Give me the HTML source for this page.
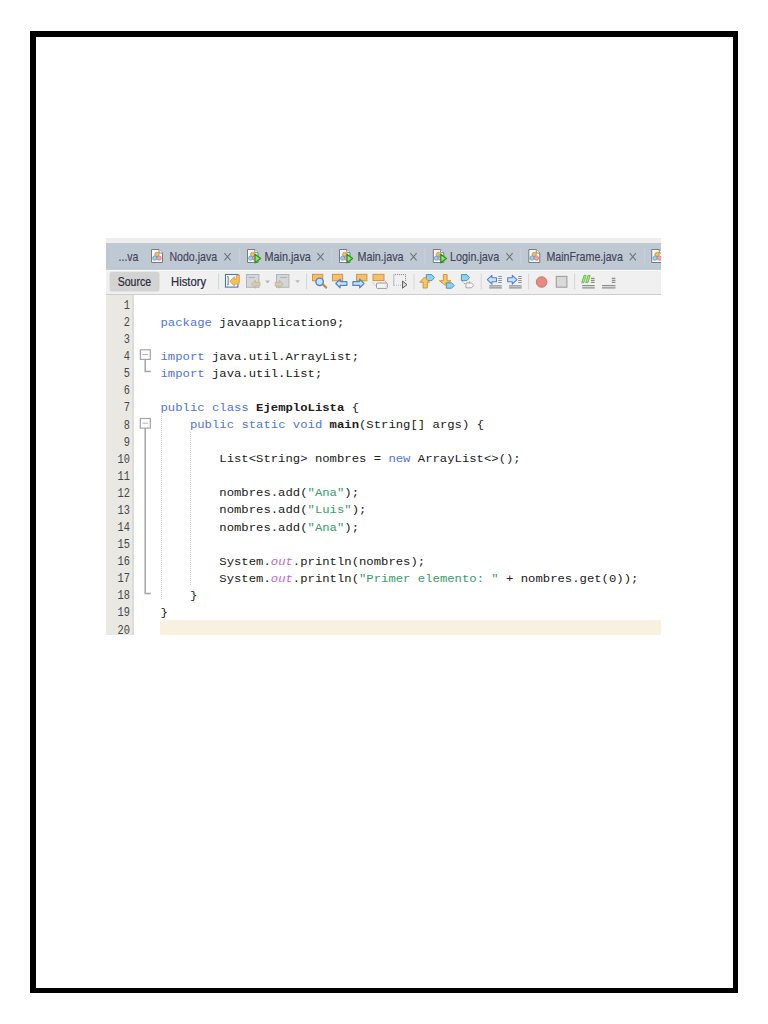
<!DOCTYPE html>
<html><head><meta charset="utf-8">
<style>
html,body{margin:0;padding:0;background:#fff;width:768px;height:1024px;overflow:hidden;position:relative}
.frame{position:absolute;left:30px;top:31px;width:708px;height:962px;box-sizing:border-box;border-style:solid;border-color:#000;border-width:6px 5px 5px 6px}
.shot{position:absolute;left:106px;top:238px;width:555px;height:397px;overflow:hidden;background:#fff}
.strip{position:absolute;left:0;top:0;width:555px;height:5px;background:#efeeed}
.tabs{position:absolute;left:0;top:5px;width:555px;height:27px;background:#bfc9d3}
.tb{position:absolute;left:0;top:32px;width:555px;height:24px;background:#f0f0f0;border-bottom:1px solid #cdcdcd}
.gut{position:absolute;left:0;top:57px;width:26px;height:340px;background:#e9e8e3;border-right:2px solid #dddcd6}
.hl{position:absolute;left:54px;width:501px;height:17.08px;background:#f8f1e0}
.t{position:absolute;font-family:"Liberation Sans",sans-serif;font-size:11px;color:#3a3a4a;white-space:nowrap;line-height:14px}
.code{position:absolute;left:54.5px;font-family:"Liberation Mono",monospace;font-size:12.25px;white-space:pre;line-height:17.08px;color:#202020;transform:scaleY(0.88);transform-origin:0 12px}
.ln{position:absolute;left:0;width:24px;text-align:right;font-family:"Liberation Mono",monospace;font-size:12px;line-height:17.08px;color:#464646;transform:scaleX(0.86);transform-origin:100% 50%}
.k{color:#5274e2}
.s{color:#35a065}
.f{color:#c266cc;font-style:italic}
.b{font-weight:bold}
.ov{position:absolute;left:0;top:0}

</style></head><body>
<div class="frame"></div>
<div class="shot">
<div class="strip"></div>
<div class="tabs"></div>
<div class="tb"></div>
<div class="gut"></div>
<svg class="ov" width="555" height="397" viewBox="106 238 555 397">
<defs>
 <g id="doc">
  <path d="M0.5,0.5 H8 L11.5,4 V13.5 H0.5 Z" fill="#f8f8f8" stroke="#7a7a7a" stroke-width="1"/>
  <path d="M8,0.5 V4 H11.5" fill="#ffffff" stroke="#7a7a7a" stroke-width="0.9"/>
  <circle cx="5.9" cy="5.4" r="2.2" fill="#f0bf5c" stroke="#b98a2a" stroke-width="0.6"/>
  <circle cx="3.8" cy="9.1" r="2.2" fill="#96d0f2" stroke="#4a88b8" stroke-width="0.6"/>
  <circle cx="8.1" cy="9.1" r="2.2" fill="#f6a2a2" stroke="#c46666" stroke-width="0.6"/>
 </g>
 <g id="run">
  <path d="M0.5,0.5 H7.8 L11,3.7 V13.5 H0.5 Z" fill="#f8f8f8" stroke="#7a7a7a" stroke-width="1"/>
  <path d="M7.8,0.5 V3.7 H11" fill="#ffffff" stroke="#7a7a7a" stroke-width="0.9"/>
  <circle cx="5.5" cy="5.4" r="2.1" fill="#f0bf5c" stroke="#b98a2a" stroke-width="0.6"/>
  <circle cx="3.6" cy="9.2" r="2.1" fill="#96d0f2" stroke="#4a88b8" stroke-width="0.6"/>
  <circle cx="7.4" cy="9.2" r="2.1" fill="#f6a2a2" stroke="#c46666" stroke-width="0.6"/>
  <path d="M8,5.2 L13.6,9.6 L8,13.8 Z" fill="#9ade7a" stroke="#1f9a1f" stroke-width="1.3" stroke-linejoin="round"/>
 </g>
 <g id="x"><path d="M0.2,0.2 L6.4,7.4 M6.4,0.2 L0.2,7.4" stroke="#727272" stroke-width="1.05"/></g>
</defs>
<!-- tab bar -->
<rect x="239.2" y="248" width="1.2" height="15.7" fill="#c9cfd5"/><rect x="331.1" y="248" width="1.2" height="15.7" fill="#c9cfd5"/><rect x="424.3" y="248" width="1.2" height="15.7" fill="#c9cfd5"/><rect x="520.1" y="248" width="1.2" height="15.7" fill="#c9cfd5"/><rect x="643.8" y="248" width="1.2" height="15.7" fill="#c9cfd5"/>
<rect x="106" y="268.8" width="555" height="1" fill="#b9c1ca"/>
<g font-family="Liberation Sans" font-size="12.4" fill="#444458" stroke="#444458" stroke-width="0.15">
 <text x="118.5" y="261" textLength="20" lengthAdjust="spacingAndGlyphs">...va</text>
 <use href="#doc" x="151" y="249"/>
 <text x="169.4" y="261" textLength="47.7" lengthAdjust="spacingAndGlyphs">Nodo.java</text>
 <use href="#x" x="224.2" y="253"/>
 <use href="#run" x="247" y="249"/>
 <text x="264.4" y="261" textLength="46.5" lengthAdjust="spacingAndGlyphs">Main.java</text>
 <use href="#x" x="317.2" y="253"/>
 <use href="#run" x="339" y="249"/>
 <text x="357.4" y="261" textLength="46.2" lengthAdjust="spacingAndGlyphs">Main.java</text>
 <use href="#x" x="410.2" y="253"/>
 <use href="#run" x="432.8" y="249"/>
 <text x="450" y="261" textLength="49.3" lengthAdjust="spacingAndGlyphs">Login.java</text>
 <use href="#x" x="506.2" y="253"/>
 <use href="#doc" x="528.3" y="249"/>
 <text x="546.4" y="261" textLength="76.5" lengthAdjust="spacingAndGlyphs">MainFrame.java</text>
 <use href="#x" x="629.5" y="253"/>
 <use href="#doc" x="651.2" y="249"/>
</g>
<!-- toolbar -->
<rect x="106" y="269.8" width="555" height="1.2" fill="#f8f8f8"/>
<rect x="109.6" y="271.8" width="49.9" height="19.6" rx="2.5" fill="#d3d3d3"/>
<g font-family="Liberation Sans" font-size="12" fill="#2a2a3a" stroke="#2a2a3a" stroke-width="0.2">
 <text x="117.7" y="285.5" textLength="33.4" lengthAdjust="spacingAndGlyphs">Source</text>
 <text x="171.1" y="285.5" textLength="35" lengthAdjust="spacingAndGlyphs">History</text>
</g>
<g stroke="#d6d6d6" stroke-width="1">
 <line x1="218.6" y1="273.5" x2="218.6" y2="289.5"/>
 <line x1="306.6" y1="273.5" x2="306.6" y2="289.5"/>
 <line x1="414" y1="273.5" x2="414" y2="289.5"/>
 <line x1="481.2" y1="273.5" x2="481.2" y2="289.5"/>
 <line x1="528.6" y1="273.5" x2="528.6" y2="289.5"/>
 <line x1="574.6" y1="273.5" x2="574.6" y2="289.5"/>
</g>
<!-- last edit -->
<rect x="225.5" y="274.5" width="12.4" height="12.6" fill="#f8fbff" stroke="#4a78a8" stroke-width="1.1"/>
<path d="M227.2,276.6 h1 v8.2 h-1" fill="none" stroke="#555" stroke-width="0.8"/>
<path d="M229.8,281.3 L234.3,276.9 V279.3 H235.9 L236.3,275.6 L239.4,274.8 V282.6 C239.4,283.5 238.6,284.1 237.6,284.1 H234.3 V286 Z" fill="#f7be5e" stroke="#d09a3a" stroke-width="0.8" stroke-linejoin="round"/>
<!-- back disabled -->
<rect x="246.5" y="274.5" width="12.4" height="12.8" fill="#d3d7db" stroke="#b0b4b8" stroke-width="1"/>
<path d="M248.5,277.5 h6.5" stroke="#a8acb0" stroke-width="0.9"/>
<path d="M251.3,284.2 L255.3,280.2 V282.4 H260 V286 H255.3 V288.3 Z" fill="#d8c9a8" stroke="#c2b08c" stroke-width="0.7" stroke-linejoin="round"/>
<path d="M265.2,280.5 h4.8 l-2.4,3 z" fill="#b4b4b4"/>
<!-- forward disabled -->
<rect x="276.5" y="274.5" width="12.4" height="12.8" fill="#d3d7db" stroke="#b0b4b8" stroke-width="1"/>
<path d="M280.2,277.5 h7" stroke="#a8acb0" stroke-width="0.9"/>
<path d="M283.3,284.2 L279.3,280.2 V282.3 H275.1 V286.1 H279.3 V288.2 Z" fill="#d8c9a8" stroke="#c2b08c" stroke-width="0.7" stroke-linejoin="round"/>
<path d="M295.3,280.2 h4.6 l-2.3,2.8 z" fill="#b4b4b4"/>
<!-- find -->
<rect x="312.5" y="274.3" width="10.3" height="6.5" fill="#f7c068" stroke="#c8913a" stroke-width="0.9"/>
<line x1="322.8" y1="284.3" x2="326.2" y2="287.6" stroke="#d28a2c" stroke-width="2.2" stroke-linecap="round"/>
<circle cx="319.6" cy="281.8" r="3.7" fill="#cfe0f6" stroke="#4a84d4" stroke-width="1.4"/>
<!-- find prev -->
<rect x="332.4" y="274.3" width="10.3" height="6.5" fill="#f7c068" stroke="#c8913a" stroke-width="0.9"/>
<path d="M335.8,283.5 l4.3,-4.3 v2.4 h6.8 v3.8 h-6.8 v2.4 z" fill="#cfe0f6" stroke="#4a84d4" stroke-width="1.2" stroke-linejoin="round"/>
<!-- find next -->
<rect x="356.6" y="274.3" width="10.3" height="6.5" fill="#f7c068" stroke="#c8913a" stroke-width="0.9"/>
<path d="M364,283.5 l-4.3,-4.3 v2.4 h-6.8 v3.8 h6.8 v2.4 z" fill="#cfe0f6" stroke="#4a84d4" stroke-width="1.2" stroke-linejoin="round"/>
<!-- toggle highlight -->
<rect x="373" y="274.3" width="11" height="6.3" fill="#f7c068" stroke="#c8913a" stroke-width="0.9"/>
<path d="M385,281 l2,2" stroke="#888" stroke-width="0.8" stroke-dasharray="1,1"/>
<path d="M372.5,282 l3,4" stroke="#aaa" stroke-width="0.8" stroke-dasharray="1,1"/>
<rect x="376.5" y="283" width="10.8" height="5.4" rx="1" fill="#f4f4f4" stroke="#9a9a9a" stroke-width="1"/>
<!-- find selection -->
<path d="M393.8,285.5 V274.6 H405.6 V281" fill="none" stroke="#707070" stroke-width="0.9" stroke-dasharray="1,1"/>
<path d="M394,285.3 h9" stroke="#b8b8b8" stroke-width="0.9" stroke-dasharray="1,1"/>
<path d="M402.5,281 l4.5,3.7 l-4.5,3.5 z" fill="#d8d8d8" stroke="#606060" stroke-width="1"/>
<!-- prev bookmark -->
<path d="M426.3,274.6 h5.5 l2.6,3 l-2.6,3 h-5.5 z" fill="#90d2ee" stroke="#3b8db8" stroke-width="0.9"/>
<path d="M424.6,277 l5,5.2 h-2.3 v5.8 h-4.2 v-5.8 h-3.4 z" fill="#f7c56a" stroke="#c9912f" stroke-width="0.9" stroke-linejoin="round"/>
<!-- next bookmark -->
<path d="M443.3,274.5 h3.8 v6.2 h3.9 l-5.8,4.6 l-5.8,-4.6 h3.9 z" fill="#f7c56a" stroke="#c9912f" stroke-width="0.9" stroke-linejoin="round"/>
<path d="M446.3,282.8 h5.3 l2.6,2.7 l-2.6,2.7 h-5.3 z" fill="#90d2ee" stroke="#3b8db8" stroke-width="0.9"/>
<!-- toggle bookmark -->
<path d="M461.4,274.6 h5.5 l2.6,3 l-2.6,3 h-5.5 z" fill="#90d2ee" stroke="#3b8db8" stroke-width="0.9"/>
<path d="M462.5,281.5 l2.5,2.5" stroke="#505050" stroke-width="0.8" stroke-dasharray="1,1"/>
<circle cx="469.3" cy="282" r="0.6" fill="#404040"/>
<path d="M466,283 h5.4 l2.4,2.4 l-2.4,2.4 h-5.4 z" fill="#f6f6f6" stroke="#a6a6a6" stroke-width="1"/>
<!-- shift left -->
<path d="M487.3,279.7 l4.6,-4.4 v2.5 h4.6 v3.9 h-4.6 v2.5 z" fill="#cfe0f6" stroke="#4a84d4" stroke-width="1.1" stroke-linejoin="round"/>
<path d="M498.3,276.5 h3.5 M498.3,278.5 h3.5 M498.3,280.5 h3.5 M498.3,282.5 h3.5 M489.2,285.8 h12.6 M489.2,287.8 h12.6" stroke="#8e8e8e" stroke-width="1.2"/>
<!-- shift right -->
<path d="M516.9,279.7 l-4.6,-4.4 v2.5 h-4.6 v3.9 h4.6 v2.5 z" fill="#cfe0f6" stroke="#4a84d4" stroke-width="1.1" stroke-linejoin="round"/>
<path d="M518.2,276.5 h3.5 M518.2,278.5 h3.5 M518.2,280.5 h3.5 M518.2,282.5 h3.5 M509.1,285.8 h12.6 M509.1,287.8 h12.6" stroke="#8e8e8e" stroke-width="1.2"/>
<!-- record -->
<circle cx="541.6" cy="282" r="5.3" fill="#e38c82" stroke="#cc6e66" stroke-width="0.9"/>
<!-- stop -->
<rect x="556.3" y="276.4" width="10.6" height="10.8" fill="#d9d9d9" stroke="#9e9e9e" stroke-width="1.1"/>
<!-- comment -->
<path d="M584,275.4 h2.2 l-2.3,7.3 h-2.2 z M588,275.4 h2.2 l-2.3,7.3 h-2.2 z" fill="#a6e27e" stroke="#5cb83a" stroke-width="0.8"/>
<path d="M591,278.4 h3.6 M591,280.4 h3.6 M591,282.4 h3.6 M582.2,285.6 h12.5 M582.2,287.8 h12.5" stroke="#8e8e8e" stroke-width="1.2"/>
<!-- uncomment -->
<path d="M611.8,278.4 h3.6 M611.8,280.4 h3.6 M611.8,282.4 h3.6 M602,285.6 h13.5 M602,287.8 h13.5" stroke="#8e8e8e" stroke-width="1.2"/>
<!-- fold markers -->
<g stroke="#a4a4a4" fill="none">
 <rect x="140.3" y="349.8" width="10" height="9.6" fill="#fff" stroke-width="1.2"/>
 <path d="M142.5,354.5 h5.5" stroke="#b4b4b4" stroke-width="1"/>
 <path d="M145.2,359.6 V371.6 H150.8" stroke-width="1.5"/>
 <rect x="140.3" y="418.5" width="10" height="9.6" fill="#fff" stroke-width="1.2"/>
 <path d="M142.5,423.2 h5.5" stroke="#b4b4b4" stroke-width="1"/>
 <path d="M145.2,428.3 V593.4 H150.8" stroke-width="1.5"/>
</g>
<!-- indent guides -->
<g stroke="#cdcdcd" stroke-width="1" stroke-dasharray="1,1">
 <line x1="161.5" y1="414" x2="161.5" y2="600"/>
 <line x1="190.5" y1="432" x2="190.5" y2="585"/>
</g>
</svg>

<div class="hl" style="top:381.52px"></div>
<div class="ln" style="top:60.00px">1</div>
<div class="ln" style="top:77.08px">2</div>
<div class="code" style="top:76.58px"><span class="k">package</span> javaapplication9;</div>
<div class="ln" style="top:94.16px">3</div>
<div class="ln" style="top:111.24px">4</div>
<div class="code" style="top:110.74px"><span class="k">import</span> java.util.ArrayList;</div>
<div class="ln" style="top:128.32px">5</div>
<div class="code" style="top:127.82px"><span class="k">import</span> java.util.List;</div>
<div class="ln" style="top:145.40px">6</div>
<div class="ln" style="top:162.48px">7</div>
<div class="code" style="top:161.98px"><span class="k">public</span> <span class="k">class</span> <span class="b">EjemploLista</span> {</div>
<div class="ln" style="top:179.56px">8</div>
<div class="code" style="top:179.06px">    <span class="k">public</span> <span class="k">static</span> <span class="k">void</span> <span class="b">main</span>(String[] args) {</div>
<div class="ln" style="top:196.64px">9</div>
<div class="ln" style="top:213.72px">10</div>
<div class="code" style="top:213.22px">        List&lt;String&gt; nombres = <span class="k">new</span> ArrayList&lt;&gt;();</div>
<div class="ln" style="top:230.80px">11</div>
<div class="ln" style="top:247.88px">12</div>
<div class="code" style="top:247.38px">        nombres.add(<span class="s">"Ana"</span>);</div>
<div class="ln" style="top:264.96px">13</div>
<div class="code" style="top:264.46px">        nombres.add(<span class="s">"Luis"</span>);</div>
<div class="ln" style="top:282.04px">14</div>
<div class="code" style="top:281.54px">        nombres.add(<span class="s">"Ana"</span>);</div>
<div class="ln" style="top:299.12px">15</div>
<div class="ln" style="top:316.20px">16</div>
<div class="code" style="top:315.70px">        System.<span class="f">out</span>.println(nombres);</div>
<div class="ln" style="top:333.28px">17</div>
<div class="code" style="top:332.78px">        System.<span class="f">out</span>.println(<span class="s">"Primer elemento: "</span> + nombres.get(0));</div>
<div class="ln" style="top:350.36px">18</div>
<div class="code" style="top:349.86px">    }</div>
<div class="ln" style="top:367.44px">19</div>
<div class="code" style="top:366.94px">}</div>
<div class="ln" style="top:384.52px">20</div>
</div>
</body></html>
